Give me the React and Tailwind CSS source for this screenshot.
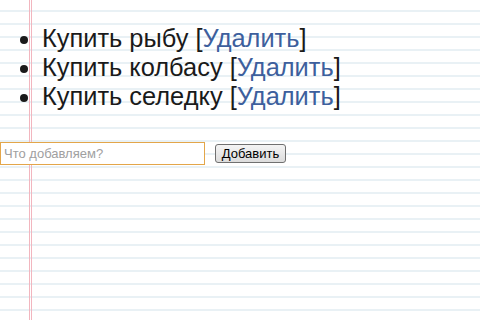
import React, { useState } from 'react';

const ITEMS = ['Купить рыбу', 'Купить колбасу', 'Купить селедку'];

export default function App() {
  const [items, setItems] = useState(ITEMS);
  const [text, setText] = useState('');

  const add = () => {
    if (!text.trim()) return;
    setItems([...items, text.trim()]);
    setText('');
  };

  return (
    <div className="relative w-[480px] h-[320px] overflow-hidden bg-white bg-[linear-gradient(to_bottom,transparent_10px,#e9f1f5_10px,#e9f1f5_12px,transparent_12px)] bg-[length:100%_13px] font-['Liberation_Sans',Arial,sans-serif]">
      <div className="absolute top-0 bottom-0 left-[29px] w-[3px] border-x border-[#f2b6bf]" />
      <div className="relative">
        <ul className="list-disc pl-[42px] pt-[24px] text-[25.4px] leading-[29px] text-[#1a1a1a]">
          {items.map((item, i) => (
            <li key={i}>
              {item} [<a href="#" className="text-[#3d5f9d]" onClick={e => { e.preventDefault(); setItems(items.filter((_, j) => j !== i)); }}>Удалить</a>]
            </li>
          ))}
        </ul>
        <div className="flex items-center mt-[31px]">
          <input
            value={text}
            onChange={e => setText(e.target.value)}
            placeholder="Что добавляем?"
            className="w-[205px] h-[23px] bg-white border border-[#e3a64a] px-[3px] text-[13px] text-black placeholder:text-[#a0a0a0] outline-none"
          />
          <button
            onClick={add}
            className="ml-[10px] w-[71px] h-[19px] rounded-[3px] border border-[#707070] bg-[linear-gradient(to_bottom,#f4f4f4,#dcdcdc)] text-[13px] leading-[17px] text-black"
          >
            Добавить
          </button>
        </div>
      </div>
    </div>
  );
}
